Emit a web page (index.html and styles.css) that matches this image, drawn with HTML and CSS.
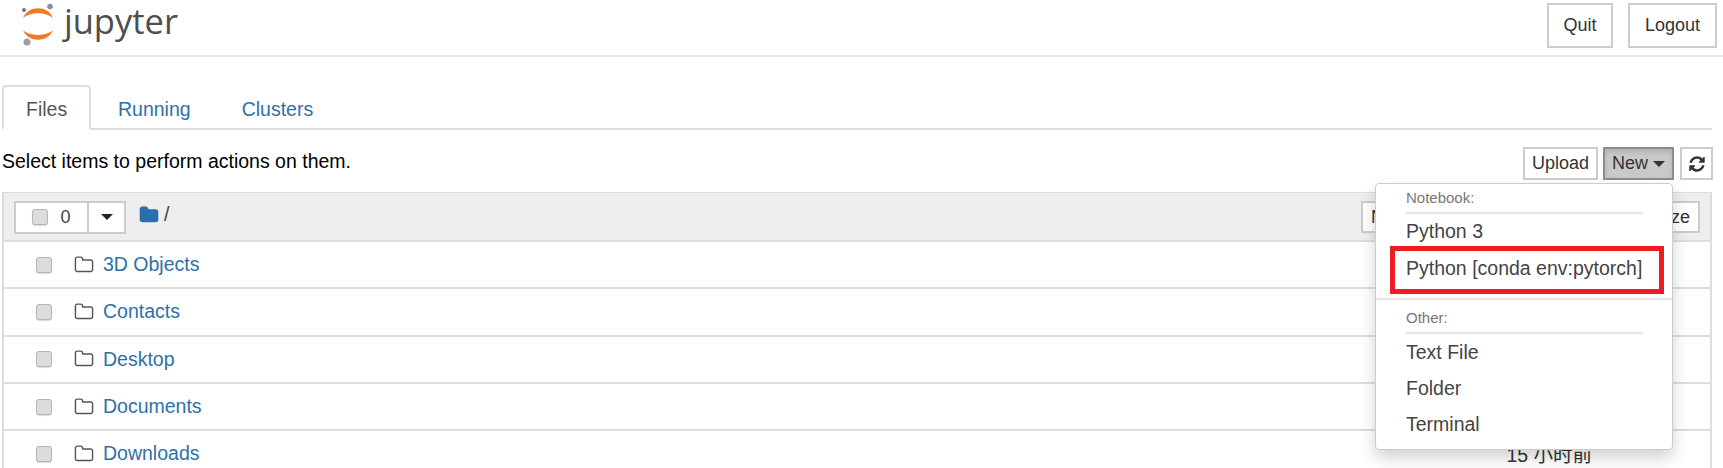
FILE: index.html
```html
<!DOCTYPE html>
<html lang="en">
<head>
  <meta charset="UTF-8">
  <title>Home</title>
  <link rel="stylesheet" href="styles.css">
</head>
<body>
  <header class="header-bar">
    <a class="logo" href="#">
      <svg class="logo-mark" width="36" height="46" viewBox="0 0 36 46">
        <circle cx="29" cy="3.500" r="2.800" fill="#8f8f8f"/>
        <circle cx="3" cy="7" r="2" fill="#767677"/>
        <circle cx="6" cy="39" r="3.500" fill="#9e9e9e"/>
        <path d="M2 15 C7 2 27 2 32 15 C25 8.500 9 8.500 2 15 Z" fill="#f37726"/>
        <path d="M2 27 C7 40 27 40 32 27 C25 33.500 9 33.500 2 27 Z" fill="#f37726"/>
      </svg>
      <span class="logo-text">jupyter</span>
    </a>
    <div class="header-buttons">
      <a class="btn header-btn quit" href="#">Quit</a>
      <a class="btn header-btn logout" href="#">Logout</a>
    </div>
  </header>

  <main class="page">
    <ul class="tabs">
      <li class="tab active">Files</li>
      <li class="tab">Running</li>
      <li class="tab">Clusters</li>
    </ul>

    <div class="toolbar">
      <span class="hint">Select items to perform actions on them.</span>
      <div class="toolbar-buttons">
        <button class="btn small">Upload</button>
        <div class="new-wrap">
          <button class="btn small new-btn">New <span class="caret"></span></button>
          <div class="menu">
            <div class="menu-label">Notebook:</div>
            <div class="menu-rule"></div>
            <div class="menu-item first">Python 3</div>
            <div class="menu-item picked">Python [conda env:pytorch]</div>
            <div class="menu-divider"></div>
            <div class="menu-label">Other:</div>
            <div class="menu-rule"></div>
            <div class="menu-item">Text File</div>
            <div class="menu-item">Folder</div>
            <div class="menu-item">Terminal</div>
          </div>
        </div>
        <button class="btn small refresh">
          <svg width="18" height="18" viewBox="0 0 1792 1792"><path fill="#333" d="M1639 1056q0 5-1 7-64 268-268 434.500t-478 166.500q-146 0-282.500-55t-243.500-157l-129 129q-19 19-45 19t-45-19-19-45v-448q0-26 19-45t45-19h448q26 0 45 19t19 45-19 45l-137 137q71 66 161 102t187 36q134 0 250-65t186-179q11-17 53-117 8-23 30-23h192q13 0 22.500 9.500t9.500 22.500zm25-800v448q0 26-19 45t-45 19h-448q-26 0-45-19t-19-45 19-45l138-138q-148-137-349-137-134 0-250 65t-186 179q-11 17-53 117-8 23-30 23h-199q-13 0-22.500-9.500t-9.500-22.500v-7q65-268 270-434.500t480-166.500q146 0 284 55.500t245 156.500l130-129q19-19 45-19t45 19 19 45z"/></svg>
        </button>
      </div>
    </div>

    <section class="list">
      <div class="list-head">
        <div class="select-group">
          <span class="select-count"><input type="checkbox" class="check"> <span>0</span></span>
          <span class="select-caret"><span class="caret dark"></span></span>
        </div>
        <svg class="root-folder" width="20" height="20" viewBox="0 0 1792 1792"><path fill="#2a6eae" d="M1728 608v704q0 92-66 158t-158 66h-1216q-92 0-158-66t-66-158v-960q0-92 66-158t158-66h320q92 0 158 66t66 158v32h672q92 0 158 66t66 158z"/></svg>
        <span class="root-path">/</span>
        <button class="btn sort-btn"><span>N</span><span>ze</span></button>
      </div>

      <div class="row">
        <input type="checkbox" class="check">
        <svg class="folder" width="20" height="20" viewBox="0 0 1792 1792"><path fill="#555" d="M1600 1312v-704q0-40-28-68t-68-28h-704q-40 0-68-28t-28-68v-64q0-40-28-68t-68-28h-320q-40 0-68 28t-28 68v960q0 40 28 68t68 28h1216q40 0 68-28t28-68zm128-704v704q0 92-66 158t-158 66h-1216q-92 0-158-66t-66-158v-960q0-92 66-158t158-66h320q92 0 158 66t66 158v32h672q92 0 158 66t66 158z"/></svg>
        <a class="name" href="#">3D Objects</a>
      </div>
      <div class="row">
        <input type="checkbox" class="check">
        <svg class="folder" width="20" height="20" viewBox="0 0 1792 1792"><path fill="#555" d="M1600 1312v-704q0-40-28-68t-68-28h-704q-40 0-68-28t-28-68v-64q0-40-28-68t-68-28h-320q-40 0-68 28t-28 68v960q0 40 28 68t68 28h1216q40 0 68-28t28-68zm128-704v704q0 92-66 158t-158 66h-1216q-92 0-158-66t-66-158v-960q0-92 66-158t158-66h320q92 0 158 66t66 158v32h672q92 0 158 66t66 158z"/></svg>
        <a class="name" href="#">Contacts</a>
      </div>
      <div class="row">
        <input type="checkbox" class="check">
        <svg class="folder" width="20" height="20" viewBox="0 0 1792 1792"><path fill="#555" d="M1600 1312v-704q0-40-28-68t-68-28h-704q-40 0-68-28t-28-68v-64q0-40-28-68t-68-28h-320q-40 0-68 28t-28 68v960q0 40 28 68t68 28h1216q40 0 68-28t28-68zm128-704v704q0 92-66 158t-158 66h-1216q-92 0-158-66t-66-158v-960q0-92 66-158t158-66h320q92 0 158 66t66 158v32h672q92 0 158 66t66 158z"/></svg>
        <a class="name" href="#">Desktop</a>
      </div>
      <div class="row">
        <input type="checkbox" class="check">
        <svg class="folder" width="20" height="20" viewBox="0 0 1792 1792"><path fill="#555" d="M1600 1312v-704q0-40-28-68t-68-28h-704q-40 0-68-28t-28-68v-64q0-40-28-68t-68-28h-320q-40 0-68 28t-28 68v960q0 40 28 68t68 28h1216q40 0 68-28t28-68zm128-704v704q0 92-66 158t-158 66h-1216q-92 0-158-66t-66-158v-960q0-92 66-158t158-66h320q92 0 158 66t66 158v32h672q92 0 158 66t66 158z"/></svg>
        <a class="name" href="#">Documents</a>
      </div>
      <div class="row">
        <input type="checkbox" class="check">
        <svg class="folder" width="20" height="20" viewBox="0 0 1792 1792"><path fill="#555" d="M1600 1312v-704q0-40-28-68t-68-28h-704q-40 0-68-28t-28-68v-64q0-40-28-68t-68-28h-320q-40 0-68 28t-28 68v960q0 40 28 68t68 28h1216q40 0 68-28t28-68zm128-704v704q0 92-66 158t-158 66h-1216q-92 0-158-66t-66-158v-960q0-92 66-158t158-66h320q92 0 158 66t66 158v32h672q92 0 158 66t66 158z"/></svg>
        <a class="name" href="#">Downloads</a>
        <span class="modified">15 小时前</span>
      </div>
    </section>
  </main>
</body>
</html>
```

FILE: styles.css
```css
/* Reset */
body, ul, li, button, input {
    margin: 0;
    padding: 0;
}

html, body {
    height: 468px;
    overflow: hidden;
}

body {
    background-color: #ffffff;
    color: #000000;
    font-family: "Liberation Sans", Arial, sans-serif;
    font-size: 19.500px;
}

a {
    text-decoration: none;
}

/* Header */
.header-bar {
    display: flex;
    justify-content: space-between;
    height: 55px;
    border-bottom: 2px solid #e7e7e7;
}

.logo {
    display: flex;
    align-items: flex-start;
    padding-left: 21px;
}

.logo-mark {
    margin-top: 3px;
}

.logo-text {
    font-family: "Open Sans", sans-serif;
    font-size: 34.500px;
    line-height: 42px;
    color: #4e4e4e;
    margin-left: 7px;
}

.header-buttons {
    display: flex;
    gap: 15px;
    padding: 3px 6px 0 0;
}

.btn {
    box-sizing: border-box;
    display: flex;
    align-items: center;
    justify-content: center;
    background-color: #ffffff;
    border: 2px solid #cccccc;
    color: #333333;
    font-family: inherit;
    font-size: 18px;
}

.header-btn {
    height: 45px;
}

.quit {
    width: 66px;
}

.logout {
    width: 89px;
}

/* Tabs */
.page {
    width: 1711px;
    margin-left: 2px;
}

.tabs {
    display: flex;
    list-style: none;
    height: 73px;
    box-sizing: border-box;
    padding-top: 28px;
    border-bottom: 2px solid #dddddd;
    margin-right: 1px;
}

.tab {
    box-sizing: border-box;
    height: 45px;
    padding: 0 22px;
    margin-right: 3px;
    line-height: 45px;
    color: #2f70a9;
    border: 2px solid transparent;
}

.tab.active {
    width: 89px;
    color: #555555;
    border-color: #dddddd;
    border-bottom-color: #ffffff;
    border-radius: 4px 4px 0 0;
}

/* Toolbar above the list */
.toolbar {
    display: flex;
    justify-content: space-between;
    height: 62px;
    padding-top: 17px;
    box-sizing: border-box;
}

.hint {
    line-height: 29px;
}

.toolbar-buttons {
    display: flex;
    gap: 5px;
    height: 33px;
}

.small {
    height: 33px;
}

.toolbar-buttons > .btn:first-child {
    width: 75px;
}

.new-wrap {
    position: relative;
}

.new-btn {
    width: 71px;
    gap: 5px;
    background-color: #c9c9c9;
    border-color: #8c8c8c;
    box-shadow: inset 0 3px 5px rgba(0, 0, 0, 0.125);
}

.refresh {
    width: 33px;
    margin-left: 1px;
}

.caret {
    display: inline-block;
    border-top: 6px solid #333333;
    border-left: 6px solid transparent;
    border-right: 6px solid transparent;
}

/* Dropdown */
.menu {
    position: absolute;
    z-index: 10;
    top: 36px;
    right: 1px;
    box-sizing: border-box;
    width: 298px;
    height: 267px;
    background-color: #ffffff;
    border: 1px solid #cccccc;
    border-radius: 4px;
    box-shadow: 0 8px 16px rgba(0, 0, 0, 0.175);
    padding-top: 5px;
}

.menu-label {
    margin-left: 30px;
    font-size: 15px;
    line-height: 17px;
    color: #777777;
}

.menu-rule {
    height: 2px;
    background-color: #e5e5e5;
    margin: 6px 29px 0 30px;
}

.menu-item {
    padding-left: 30px;
    height: 36px;
    line-height: 36px;
    color: #444444;
    white-space: nowrap;
}

.menu-item.first {
    height: 34px;
    line-height: 34px;
}

.menu-item.picked {
    box-sizing: border-box;
    height: 48px;
    width: 274px;
    margin: -2px 0 0 14px;
    padding-left: 11px;
    line-height: 34px;
    border: 5px solid #ed1c24;
}

.menu-divider {
    height: 2px;
    background-color: #e5e5e5;
    margin: 4px 0 9px;
}

/* File list */
.list {
    border: 2px solid #dddddd;
    border-top: 0;
    width: 1710px;
    box-sizing: border-box;
}

.list-head {
    display: flex;
    align-items: center;
    height: 50px;
    box-sizing: border-box;
    background-color: #eeeeee;
    border-top: 1px solid #dddddd;
    border-bottom: 2px solid #dddddd;
    padding: 1px 0 0 10px;
}

.select-group {
    display: flex;
    box-sizing: border-box;
    height: 33px;
    width: 112px;
    background-color: #ffffff;
    border: 2px solid #cccccc;
}

.select-count {
    display: flex;
    align-items: center;
    justify-content: center;
    gap: 12px;
    width: 71px;
    color: #444444;
    border-right: 2px solid #cccccc;
    font-size: 18px;
}

.select-caret {
    flex: 1;
    display: flex;
    align-items: center;
    justify-content: center;
}

.dark {
    border-top-color: #222222;
}

.root-folder {
    margin-left: 13px;
    margin-top: -5px;
}

.root-path {
    margin-left: 5px;
    margin-top: -5px;
    color: #444444;
}

.sort-btn {
    width: 339px;
    height: 32px;
    margin-left: auto;
    margin-right: 10px;
    justify-content: space-between;
    padding: 0 8px;
}

.row {
    display: flex;
    align-items: center;
    height: 47.330px;
    box-sizing: border-box;
    padding-left: 31px;
    border-bottom: 2px solid #dddddd;
}

.check {
    appearance: none;
    box-sizing: border-box;
    width: 16px;
    height: 16px;
    flex: none;
    background-color: #dcdcdc;
    border: 1px solid #b5b5b5;
    border-radius: 3px;
    box-shadow: 0 1px 1px rgba(0, 0, 0, 0.15);
}

.row .check {
    margin-left: 1px;
}

.folder {
    margin-left: 22px;
}

.name {
    margin-left: 9px;
    color: #2f70a9;
}

.modified {
    margin-left: auto;
    margin-right: 118px;
    color: #333333;
    font-family: "Liberation Sans", "Noto Sans CJK SC", sans-serif;
}
```
